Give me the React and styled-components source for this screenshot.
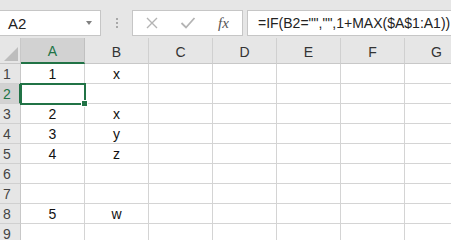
import React from 'react'
import styled, { createGlobalStyle } from 'styled-components'

const GREEN = '#217346'
const GRID = '#d4d4d4'

const Global = createGlobalStyle`
    body {
        margin: 0;
        background: #ffffff;
        font-family: "Liberation Sans", Arial, sans-serif;
        overflow: hidden;
    }
`
const Page = styled.div`
    width: 451px;
    height: 240px;
    overflow: hidden;
    background: #e6e6e6;
`
const Toolbar = styled.div`
    display: flex;
    align-items: flex-start;
    height: 38px;
    padding-top: 10px;
    box-sizing: border-box;
`
const NameBox = styled.div`
    display: flex;
    flex-shrink: 0;
    align-items: center;
    justify-content: space-between;
    box-sizing: border-box;
    width: 102px;
    height: 26px;
    margin-left: -1px;
    padding: 0 8px 0 8px;
    background: #fff;
    border: 1px solid #c6c6c6;
    font-size: 15px;
    color: #222;
`
const Caret = styled.span`
    width: 0;
    height: 0;
    border-left: 3px solid transparent;
    border-right: 3px solid transparent;
    border-top: 4px solid #808080;
`
const Dots = styled.div`
    display: flex;
    flex-shrink: 0;
    flex-direction: column;
    gap: 2px;
    margin: 8px 14px 0 15px;
    span {
        width: 2px;
        height: 2px;
        background: #a8a8a8;
    }
`
const FxBox = styled.div`
    display: flex;
    flex-shrink: 0;
    align-items: center;
    box-sizing: border-box;
    width: 111px;
    height: 26px;
    padding-left: 12px;
    gap: 21px;
    background: #fff;
    border: 1px solid #c6c6c6;
`
const Fx = styled.span`
    font-family: "Liberation Serif", "Times New Roman", serif;
    font-style: italic;
    font-size: 15px;
    color: #555;
    margin-left: 1px;
`
const Formula = styled.div`
    flex: 1;
    min-width: 0;
    display: flex;
    align-items: center;
    box-sizing: border-box;
    height: 26px;
    margin-left: 4px;
    margin-right: -2px;
    padding-left: 10px;
    background: #fff;
    border: 1px solid #c6c6c6;
    font-size: 14px;
    color: #222;
    white-space: nowrap;
`
const Sheet = styled.div`
    position: relative;
    display: grid;
    grid-template-columns: 21px repeat(7, 64px);
    grid-template-rows: 26px repeat(9, 20px);
`
const Corner = styled.div`
    position: relative;
    background: #e6e6e6;
    border-right: 1px solid #c8c8c8;
    border-bottom: 1px solid #c8c8c8;
    box-sizing: border-box;
    svg {
        position: absolute;
        right: 2px;
        bottom: 2px;
    }
`
const ColHead = styled.div`
    display: flex;
    align-items: center;
    justify-content: center;
    box-sizing: border-box;
    background: ${({ $active }) => ($active ? '#d2d2d2' : '#e6e6e6')};
    color: ${({ $active }) => ($active ? GREEN : '#333')};
    border-right: 1px solid ${({ $active }) => ($active ? '#c0c0c0' : '#d0d0d0')};
    border-bottom: ${({ $active }) => ($active ? `2px solid ${GREEN}` : '1px solid #c8c8c8')};
    font-size: 14px;
    padding-top: 2px;
`
const RowHead = styled.div`
    display: flex;
    align-items: center;
    box-sizing: border-box;
    padding-left: 3px;
    background: ${({ $active }) => ($active ? '#d2d2d2' : '#e6e6e6')};
    color: ${({ $active }) => ($active ? GREEN : '#444')};
    border-right: ${({ $active }) => ($active ? `2px solid ${GREEN}` : '1px solid #c8c8c8')};
    border-bottom: 1px solid #d0d0d0;
    font-size: 14px;
`
const Cell = styled.div`
    display: flex;
    align-items: center;
    justify-content: center;
    box-sizing: border-box;
    background: #fff;
    border-right: 1px solid ${GRID};
    border-bottom: 1px solid ${GRID};
    font-size: 14px;
    color: #111;
`
const Selection = styled.div`
    position: absolute;
    left: 20px;
    top: 45px;
    width: 66px;
    height: 22px;
    box-sizing: border-box;
    border: 2px solid ${GREEN};
    pointer-events: none;
`
const Handle = styled.div`
    position: absolute;
    right: -4px;
    bottom: -4px;
    width: 5px;
    height: 5px;
    background: ${GREEN};
    border: 1px solid #fff;
`

const cols = ['A', 'B', 'C', 'D', 'E', 'F', 'G']
const data = {
    1: ['1', 'x'],
    3: ['2', 'x'],
    4: ['3', 'y'],
    5: ['4', 'z'],
    8: ['5', 'w'],
}

function Cross() {
    return (
        <svg width="14" height="14" viewBox="0 0 14 14">
            <path d="M2 2 L12 12 M12 2 L2 12" stroke="#b4b4b4" strokeWidth="1.4" fill="none" />
        </svg>
    )
}

function Check() {
    return (
        <svg width="16" height="14" viewBox="0 0 16 14">
            <path d="M1.5 7 L6 11.5 L14.5 2" stroke="#b4b4b4" strokeWidth="1.8" fill="none" />
        </svg>
    )
}

export default function App() {
    const rows = [1, 2, 3, 4, 5, 6, 7, 8, 9]
    return (
        <Page>
            <Global />
            <Toolbar>
                <NameBox>
                    <span>A2</span>
                    <Caret />
                </NameBox>
                <Dots><span /><span /><span /></Dots>
                <FxBox>
                    <Cross />
                    <Check />
                    <Fx>fx</Fx>
                </FxBox>
                <Formula>=IF(B2="","",1+MAX($A$1:A1))</Formula>
            </Toolbar>
            <Sheet>
                <Corner>
                    <svg width="14" height="14" viewBox="0 0 14 14">
                        <path d="M14 0 L14 14 L0 14 Z" fill="#bdbdbd" />
                    </svg>
                </Corner>
                {cols.map((c) => (
                    <ColHead key={c} $active={c === 'A'}>{c}</ColHead>
                ))}
                {rows.map((r) => (
                    <React.Fragment key={r}>
                        <RowHead $active={r === 2}>{r}</RowHead>
                        {cols.map((c, i) => (
                            <Cell key={c}>{data[r] && data[r][i]}</Cell>
                        ))}
                    </React.Fragment>
                ))}
                <Selection>
                    <Handle />
                </Selection>
            </Sheet>
        </Page>
    )
}
